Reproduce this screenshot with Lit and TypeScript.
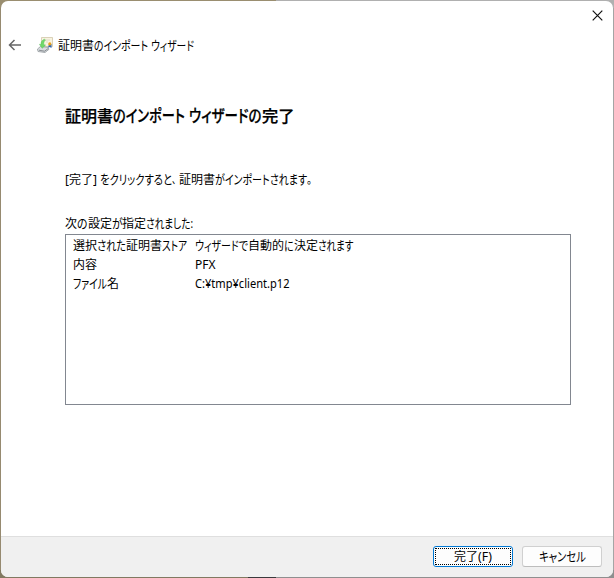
import { LitElement, html, css, svg } from "lit";
import { customElement, property } from "lit/decorators.js";
import { classMap } from "lit/directives/class-map.js";

type Run = [string, number];

const KANA = /[\u3041-\u30fa]/;

/** One line of text whose runs are condensed to the proportional widths of a UI typeface. */
@customElement("fit-line")
class FitLine extends LitElement {
  @property({ attribute: false }) runs: Run[] = [];

  static styles = css`
    :host { display: block; white-space: pre; }
    .line { display: flex; align-items: baseline; }
    .run { display: block; flex: none; }
    .glyphs { display: inline-block; transform-origin: 0 50%; font-feature-settings: "palt"; }
    .kana { font-size: 1.07em; }
  `;

  render() {
    return html`<div class="line">${this.runs.map(
      ([text, width]) =>
        html`<span class="run" style="width:${width}px"><span class=${classMap({ glyphs: true, kana: KANA.test(text) })}>${text}</span></span>`
    )}</div>`;
  }

  updated() {
    this.renderRoot.querySelectorAll<HTMLElement>(".glyphs").forEach((el, i) => {
      el.style.transform = "none";
      const natural = el.getBoundingClientRect().width;
      if (natural) el.style.transform = `scaleX(${this.runs[i][1] / natural})`;
    });
  }
}

const title: Run[] = [["証明書", 36], ["のインポート", 54], [" ", 2.5], ["ウィザード", 43]];
const heading: Run[] = [["証明書", 48], ["のインポート", 72], [" ", 4], ["ウィザードの", 72.5], ["完了", 32.5]];
const intro: Run[] = [["[", 4], ["完了", 24], ["]", 4], [" ", 3], ["をクリックすると", 72], ["、", 4], [" ", 3], ["証明書", 36], ["がインポートされます", 92], ["。", 5]];
const caption: Run[] = [["次", 12], ["の", 10.5], ["設定", 24], ["が", 10.5], ["指定", 24], ["されました:", 47]];
const settings: { name: Run[]; value: Run[] }[] = [
  {
    name: [["選択", 24], ["された", 29], ["証明書", 36], ["ストア", 25]],
    value: [["ウィザードで", 53], ["自動的", 36], ["に", 9.5], ["決定", 24], ["されます", 35.5]],
  },
  { name: [["内容", 24]], value: [["PFX", 20.5]] },
  { name: [["ファイル", 34], ["名", 12]], value: [["C:¥tmp¥client.p12", 94.5]] },
];

@customElement("app-root")
class AppRoot extends LitElement {
  static styles = css`
    :host {
      display: block; box-sizing: border-box; width: 614px; height: 578px; padding: 1px;
      background:
        linear-gradient(90deg, #817961 0 248px, #3a3a3c 248px 276px, #8f8f8f 276px) 0 100% / 100% 8px no-repeat,
        linear-gradient(90deg, #9a8e70 0 276px, #b0b0b0 276px) 0 0 / 100% 8px no-repeat,
        linear-gradient(90deg, #968a70 0 50%, #a5a5a5 50%);
      font: 12px/16px "Noto Sans", "Noto Sans CJK JP", sans-serif; color: #000;
    }
    .window {
      display: flex; flex-direction: column; height: 100%; box-sizing: border-box;
      border-radius: 7px; overflow: hidden; background: #fff;
    }
    .caption-bar { display: flex; justify-content: flex-end; height: 28px; padding: 9px 10px 0 0; box-sizing: border-box; }
    .header { display: flex; align-items: center; height: 32px; padding-left: 7px; box-sizing: border-box; }
    .back { margin-right: 15px; }
    .badge { margin-right: 5px; }
    svg { display: block; flex: none; }
    fit-line { height: 16px; }
    .body { flex: 1; padding: 42px 42px 0 64px; }
    .heading {
      height: 24px; font-size: 16px; line-height: 24px; font-weight: 500;
      font-family: "Noto Sans CJK JP", sans-serif; -webkit-text-stroke: 0.25px #000;
    }
    .intro { margin-top: 44px; }
    .list-caption { margin-top: 28px; }
    .list {
      box-sizing: border-box; width: 506px; height: 171px; margin-top: 3px; padding: 1px 8px 0 7px;
      border: 1px solid #828790;
    }
    .row { display: grid; grid-template-columns: 122px 1fr; height: 19px; line-height: 19px; }
    .row fit-line { height: 19px; }
    .footer {
      display: flex; justify-content: flex-end; gap: 9px; height: 41px; box-sizing: border-box;
      padding: 9px 11px 0 0; border-top: 1px solid #dfdfdf; background: #f0f0f0;
    }
    .button {
      display: flex; align-items: center; justify-content: center; box-sizing: border-box;
      width: 80px; height: 21px; border: 1px solid #d0d0d0; border-bottom-color: #bdbdbd;
      border-radius: 3px; background: #fdfdfd;
    }
    .cancel { padding-bottom: 2px; }
    .primary { border-color: #0078d4; padding: 1px; }
    .focus {
      display: flex; align-items: center; justify-content: center; box-sizing: border-box;
      width: 100%; height: 100%; border: 1px dotted #000;
    }
  `;

  render() {
    return html`
      <div class="window">
        <div class="caption-bar">
          <svg width="11" height="11" viewBox="0 0 11 11">${svg`<path d="M.7.7l9.6 9.6M10.3.7L.7 10.3" stroke="#111" stroke-width="1.2" fill="none"/>`}</svg>
        </div>
        <div class="header">
          <svg class="back" width="14" height="12" viewBox="0 0 14 12">${svg`<path d="M13 6H1.5M6.5 1l-5 5 5 5" stroke="#666" stroke-width="1.5" fill="none"/>`}</svg>
          <svg class="badge" width="16" height="16" viewBox="0 0 16 16">
            <path d="M4.5.5h11v9h-11z" fill="#f8f3df" stroke="#d2c7aa" stroke-width=".8" />
            <path d="M8 3h5M9 5h2" stroke="#d8d2c2" stroke-width=".8" />
            <path d="M12 7l-1 4 1.7-1L14.5 11V7z" fill="#2f66b5" />
            <circle cx="12.8" cy="6.9" r="1.6" fill="#e9a11c" />
            <path d="M.5 12l3-2.5 7.5.8 1 2-4 3.2-7-1z" fill="#d9dde0" stroke="#949a9e" stroke-width=".8" />
            <path d="M2 13.2l5.5 1 3.5-2.5" stroke="#74797d" stroke-width=".8" fill="none" />
            <path d="M7.5 2.2C5 3 3.8 5 3.9 7.5L2.4 7.3l2.8 4 3.4-3.3-1.8-.2C6.5 5.6 7.2 4 8.5 3z" fill="#6fd96a" stroke="#4ab84c" stroke-width=".4" />
          </svg>
          <fit-line .runs=${title}></fit-line>
        </div>
        <div class="body">
          <fit-line class="heading" .runs=${heading}></fit-line>
          <fit-line class="intro" .runs=${intro}></fit-line>
          <fit-line class="list-caption" .runs=${caption}></fit-line>
          <div class="list">
            ${settings.map((s) => html`<div class="row"><fit-line .runs=${s.name}></fit-line><fit-line .runs=${s.value}></fit-line></div>`)}
          </div>
        </div>
        <div class="footer">
          <div class="button primary"><div class="focus"><fit-line .runs=${[["完了", 24], ["(F)", 14]] as Run[]}></fit-line></div></div>
          <div class="button cancel"><fit-line .runs=${[["キャンセル", 47]] as Run[]}></fit-line></div>
        </div>
      </div>
    `;
  }
}
